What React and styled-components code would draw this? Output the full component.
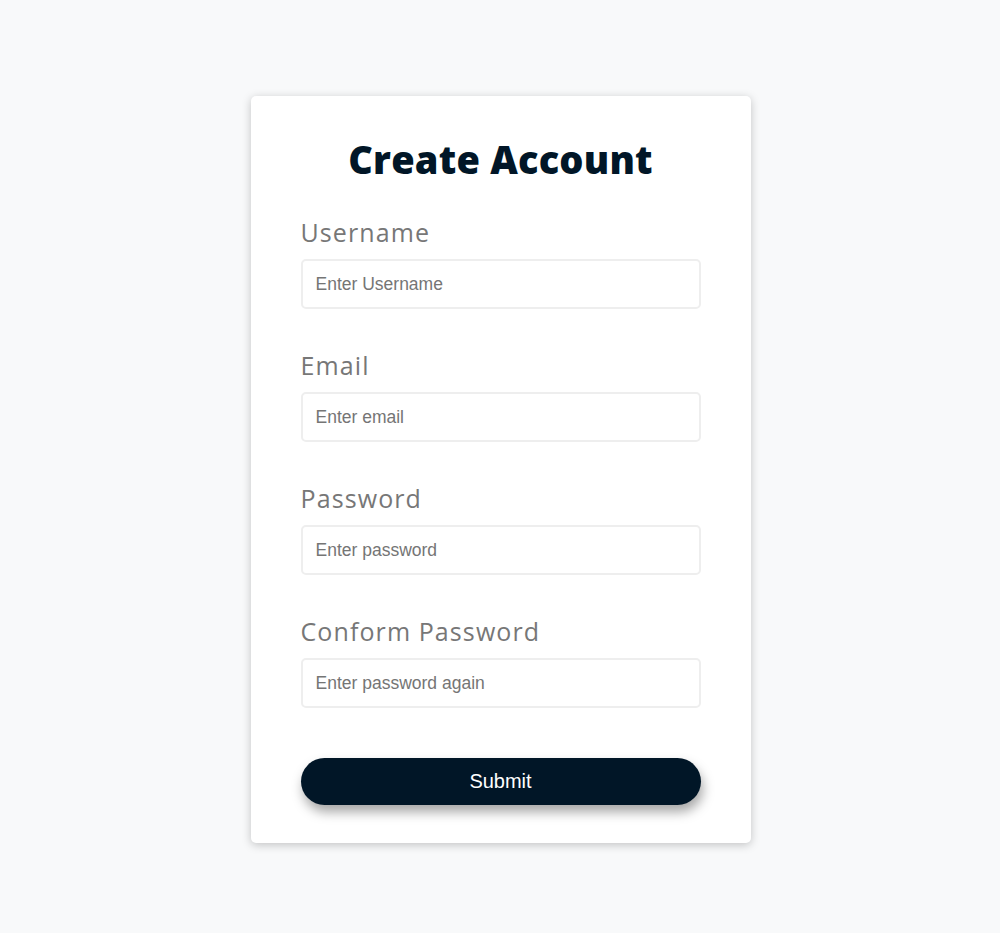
import React from "react";
import styled, { createGlobalStyle } from "styled-components";

const Global = createGlobalStyle`
  html, body { margin: 0; padding: 0; background: #f8f9fa; }
  body { font-family: "Liberation Sans", Arial, sans-serif; }
  * { box-sizing: border-box; }
`;

const Page = styled.div`
  min-height: 933px;
  display: flex;
  justify-content: center;
  align-items: flex-start;
  padding: 96px 0 0 1px;
`;

const Card = styled.form`
  width: 500px;
  background: #fff;
  border-radius: 5px;
  box-shadow: 0 2px 10px rgba(0, 0, 0, 0.22);
  padding: 36px 50px 38px;
  display: flex;
  flex-direction: column;
`;

const Title = styled.h1`
  margin: 0 0 28px;
  text-align: center;
  font-family: "Open Sans", sans-serif;
  font-weight: 800;
  font-size: 38px;
  line-height: 54px;
  color: #011627;
  letter-spacing: 0.2px;
`;

const Field = styled.div`
  display: flex;
  flex-direction: column;
  margin-bottom: ${(p) => (p.$last ? "50px" : "38px")};
`;

const Label = styled.label`
  font-family: "Open Sans", sans-serif;
  font-weight: 400;
  font-size: 25px;
  line-height: 36px;
  letter-spacing: 1.1px;
  color: #777777;
  margin-bottom: 9px;
`;

const Input = styled.input`
  height: 50px;
  width: 100%;
  border: 2px solid #eeeeee;
  border-radius: 5px;
  padding: 0 13px;
  font-family: "Liberation Sans", Arial, sans-serif;
  font-size: 17.5px;
  color: #333;
  outline: none;
  &::placeholder { color: #757575; }
`;

const Button = styled.button`
  height: 47px;
  width: 100%;
  border: none;
  border-radius: 24px;
  background: #011627;
  color: #fff;
  font-family: "Liberation Sans", Arial, sans-serif;
  font-size: 20px;
  box-shadow: 2px 7px 12px rgba(0, 0, 0, 0.35);
  cursor: pointer;
`;

const fields = [
  { label: "Username", ph: "Enter Username", type: "text" },
  { label: "Email", ph: "Enter email", type: "email" },
  { label: "Password", ph: "Enter password", type: "password" },
  { label: "Conform Password", ph: "Enter password again", type: "password" },
];

export default function App() {
  return (
    <>
      <Global />
      <Page>
        <Card onSubmit={(e) => e.preventDefault()}>
          <Title>Create Account</Title>
          {fields.map((f, i) => (
            <Field key={f.label} $last={i === fields.length - 1}>
              <Label>{f.label}</Label>
              <Input type={f.type} placeholder={f.ph} />
            </Field>
          ))}
          <Button type="submit">Submit</Button>
        </Card>
      </Page>
    </>
  );
}
